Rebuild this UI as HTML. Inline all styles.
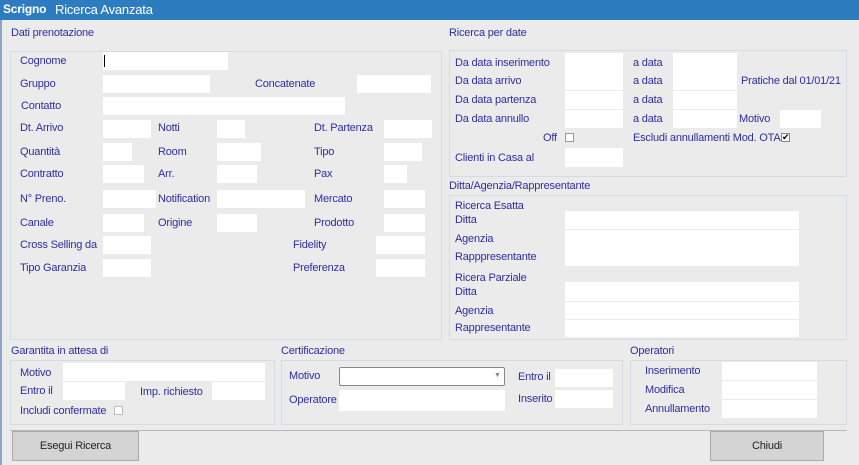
<!DOCTYPE html>
<html><head><meta charset="utf-8"><style>
*{margin:0;padding:0;box-sizing:border-box}
body{width:859px;height:465px;background:#ebebeb;position:relative;overflow:hidden;font-family:"Liberation Sans",sans-serif;font-size:11px;letter-spacing:-0.2px;color:#2e2ea0}
.t{position:absolute;white-space:nowrap;line-height:14px}
.i{position:absolute;background:#fff;height:18px}
.b{position:absolute;border:1px solid #d3dbe3;background:#ebebeb}
.h{position:absolute;white-space:nowrap;line-height:14px;color:#2e2ea0}
.cb{position:absolute;width:9px;height:9px;border:1px solid #999;background:#fff}
.btn{position:absolute;background:#d4d4d4;border:1px solid #aaa;color:#222;text-align:center;line-height:28px;font-size:11px}
</style></head><body>
<div style="position:absolute;left:0;top:0;width:859px;height:20px;background:#2e7cc0"></div>
<div class="t" style="left:3px;top:2px;color:#fff;font-weight:bold;font-size:12px">Scrigno</div>
<div class="t" style="left:55px;top:3px;color:#fff;font-size:13px">Ricerca Avanzata</div>
<div style="position:absolute;left:0;top:20px;width:2px;height:445px;background:#8aa6c4"></div>

<div class="h" style="left:11px;top:26px">Dati prenotazione</div>
<div class="b" style="left:10px;top:51px;width:432px;height:289px"></div>
<div class="h" style="left:449px;top:26px">Ricerca per date</div>
<div class="b" style="left:449px;top:50px;width:398px;height:127px"></div>
<div class="h" style="left:449px;top:179px">Ditta/Agenzia/Rappresentante</div>
<div class="b" style="left:449px;top:195px;width:398px;height:145px"></div>
<div class="h" style="left:11px;top:344px">Garantita in attesa di</div>
<div class="b" style="left:10px;top:360px;width:265px;height:65px"></div>
<div class="h" style="left:281px;top:344px">Certificazione</div>
<div class="b" style="left:281px;top:360px;width:342px;height:65px"></div>
<div class="h" style="left:630px;top:344px">Operatori</div>
<div class="b" style="left:630px;top:360px;width:217px;height:65px"></div>
<div style="position:absolute;left:10px;top:430px;width:837px;height:1px;background:#b8b8b8"></div>

<div class="t" style="left:20px;top:54px">Cognome</div><div class="i" style="left:103px;top:52px;width:125px"></div>
<div style="position:absolute;left:104px;top:55px;width:1px;height:12px;background:#000"></div>
<div class="t" style="left:20px;top:77px">Gruppo</div><div class="i" style="left:103px;top:75px;width:107px"></div>
<div class="t" style="left:255px;top:77px">Concatenate</div><div class="i" style="left:357px;top:75px;width:74px"></div>
<div class="t" style="left:21px;top:99px">Contatto</div><div class="i" style="left:103px;top:97px;width:242px"></div>

<div class="t" style="left:20px;top:121px">Dt. Arrivo</div><div class="i" style="left:103px;top:120px;width:48px"></div>
<div class="t" style="left:158px;top:121px">Notti</div><div class="i" style="left:217px;top:120px;width:28px"></div>
<div class="t" style="left:314px;top:121px">Dt. Partenza</div><div class="i" style="left:384px;top:120px;width:48px"></div>

<div class="t" style="left:20px;top:145px">Quantità</div><div class="i" style="left:103px;top:143px;width:29px"></div>
<div class="t" style="left:158px;top:145px">Room</div><div class="i" style="left:217px;top:143px;width:44px"></div>
<div class="t" style="left:314px;top:145px">Tipo</div><div class="i" style="left:384px;top:143px;width:38px"></div>

<div class="t" style="left:20px;top:167px">Contratto</div><div class="i" style="left:103px;top:165px;width:41px"></div>
<div class="t" style="left:158px;top:167px">Arr.</div><div class="i" style="left:217px;top:165px;width:40px"></div>
<div class="t" style="left:314px;top:167px">Pax</div><div class="i" style="left:384px;top:165px;width:23px"></div>

<div class="t" style="left:20px;top:192px">N° Preno.</div><div class="i" style="left:103px;top:190px;width:53px"></div>
<div class="t" style="left:158px;top:192px">Notification</div><div class="i" style="left:217px;top:190px;width:88px"></div>
<div class="t" style="left:314px;top:192px">Mercato</div><div class="i" style="left:384px;top:190px;width:41px"></div>

<div class="t" style="left:20px;top:216px">Canale</div><div class="i" style="left:103px;top:214px;width:41px"></div>
<div class="t" style="left:158px;top:216px">Origine</div><div class="i" style="left:217px;top:214px;width:40px"></div>
<div class="t" style="left:314px;top:216px">Prodotto</div><div class="i" style="left:384px;top:214px;width:41px"></div>

<div class="t" style="left:20px;top:238px">Cross Selling da</div><div class="i" style="left:103px;top:236px;width:48px"></div>
<div class="t" style="left:293px;top:238px">Fidelity</div><div class="i" style="left:376px;top:236px;width:49px"></div>
<div class="t" style="left:20px;top:261px">Tipo Garanzia</div><div class="i" style="left:103px;top:259px;width:48px"></div>
<div class="t" style="left:293px;top:261px">Preferenza</div><div class="i" style="left:376px;top:259px;width:49px"></div>

<div class="t" style="left:455px;top:56px">Da data inserimento</div>
<div class="t" style="left:455px;top:74px">Da data arrivo</div>
<div class="t" style="left:455px;top:93px">Da data partenza</div>
<div class="t" style="left:455px;top:112px">Da data annullo</div>
<div class="i" style="left:565px;top:53px;width:58px;height:37px"></div>
<div class="i" style="left:565px;top:91px;width:58px;height:18px"></div>
<div class="i" style="left:565px;top:110px;width:58px;height:18px"></div>
<div class="t" style="left:633px;top:56px">a data</div>
<div class="t" style="left:633px;top:74px">a data</div>
<div class="t" style="left:633px;top:93px">a data</div>
<div class="t" style="left:633px;top:112px">a data</div>
<div class="i" style="left:673px;top:53px;width:64px;height:37px"></div>
<div class="i" style="left:673px;top:91px;width:64px;height:18px"></div>
<div class="i" style="left:673px;top:110px;width:64px;height:18px"></div>
<div class="t" style="left:741px;top:74px">Pratiche dal 01/01/21</div>
<div class="t" style="left:739px;top:112px">Motivo</div><div class="i" style="left:780px;top:110px;width:41px"></div>
<div class="t" style="left:543px;top:131px">Off</div><div class="cb" style="left:565px;top:133px"></div>
<div class="t" style="left:633px;top:131px">Escludi annullamenti Mod. OTA</div>
<div class="cb" style="left:781px;top:133px;border-color:#888;font-size:9px;line-height:7px;color:#000;text-align:center">✔</div>
<div class="t" style="left:455px;top:151px">Clienti in Casa al</div><div class="i" style="left:565px;top:148px;width:58px;height:19px"></div>

<div class="t" style="left:455px;top:199px">Ricerca Esatta</div>
<div class="t" style="left:455px;top:213px">Ditta</div>
<div class="t" style="left:455px;top:232px">Agenzia</div>
<div class="t" style="left:455px;top:250px">Rapppresentante</div>
<div class="i" style="left:565px;top:211px;width:234px;height:18px"></div>
<div class="i" style="left:565px;top:230px;width:234px;height:36px"></div>
<div class="t" style="left:455px;top:271px">Ricera Parziale</div>
<div class="t" style="left:455px;top:285px">Ditta</div>
<div class="t" style="left:455px;top:304px">Agenzia</div>
<div class="t" style="left:455px;top:321px">Rappresentante</div>
<div class="i" style="left:565px;top:282px;width:234px;height:19px"></div>
<div class="i" style="left:565px;top:302px;width:234px;height:17px"></div>
<div class="i" style="left:565px;top:320px;width:234px;height:17px"></div>

<div class="t" style="left:20px;top:366px">Motivo</div><div class="i" style="left:63px;top:363px;width:202px"></div>
<div class="t" style="left:20px;top:384px">Entro il</div><div class="i" style="left:63px;top:382px;width:62px"></div>
<div class="t" style="left:140px;top:385px">Imp. richiesto</div><div class="i" style="left:212px;top:382px;width:53px"></div>
<div class="t" style="left:20px;top:404px">Includi confermate</div><div class="cb" style="left:114px;top:406px;border-color:#bbb"></div>

<div class="t" style="left:289px;top:369px">Motivo</div>
<div style="position:absolute;left:339px;top:367px;width:166px;height:19px;background:#fff;border:1px solid #888;border-radius:2px"></div>
<div class="t" style="left:494px;top:369px;font-size:7px;color:#888">▼</div>
<div class="t" style="left:518px;top:370px">Entro il</div><div class="i" style="left:555px;top:369px;width:58px"></div>
<div class="t" style="left:289px;top:393px">Operatore</div><div class="i" style="left:339px;top:390px;width:166px;height:21px"></div>
<div class="t" style="left:518px;top:392px">Inserito</div><div class="i" style="left:555px;top:390px;width:58px"></div>

<div class="t" style="left:645px;top:364px">Inserimento</div><div class="i" style="left:722px;top:362px;width:95px"></div>
<div class="t" style="left:645px;top:383px">Modifica</div><div class="i" style="left:722px;top:381px;width:95px"></div>
<div class="t" style="left:645px;top:402px">Annullamento</div><div class="i" style="left:722px;top:400px;width:95px"></div>

<div class="btn" style="left:12px;top:431px;width:127px;height:30px">Esegui Ricerca</div>
<div class="btn" style="left:710px;top:431px;width:114px;height:30px">Chiudi</div>
</body></html>
